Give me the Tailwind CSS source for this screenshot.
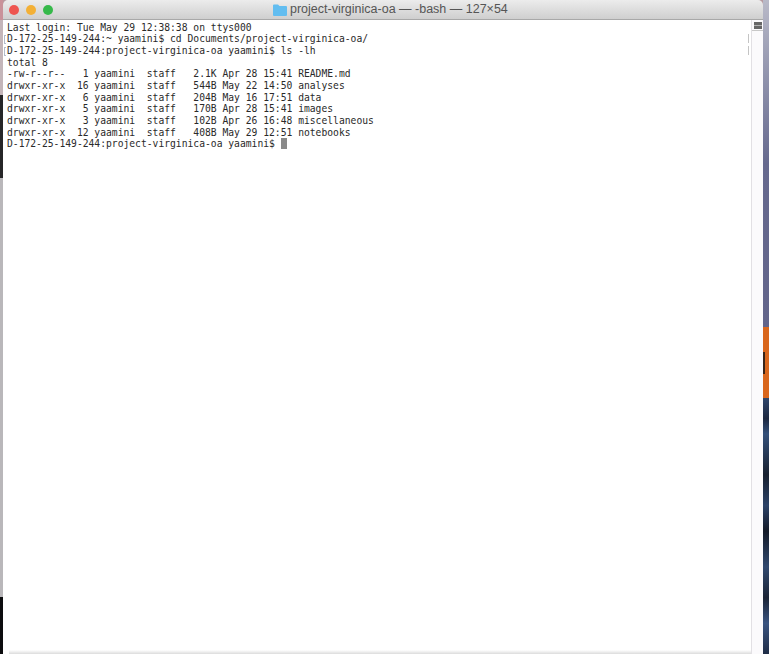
<!DOCTYPE html>
<html lang="en">

<head>
    <meta charset="UTF-8" />
    <title>Terminal</title>
    <script src="https://cdn.jsdelivr.net/npm/@tailwindcss/browser@4"></script>
</head>

<body class="bg-white">
    <div class="w-[769px] h-[654px] overflow-hidden flex">
        <!-- wallpaper, left edge -->
        <div class="w-[3px] h-full flex flex-col shrink-0">
            <div class="h-[20px] bg-[#c9929a]"></div>
            <div class="h-[75px] bg-[#c4b6ba]"></div>
            <div class="h-[83px] bg-[#262628]"></div>
            <div class="h-[419px] bg-[#b9b7ba]"></div>
            <div class="flex-1 bg-[#0c0c0e]"></div>
        </div>

        <!-- terminal window -->
        <div class="w-[760px] h-full shrink-0 flex flex-col">
            <div class="h-[20px] shrink-0 bg-[#b79aa0]">
                <div class="h-[20px] bg-gradient-to-b from-[#ececec] to-[#cfcfcf] border-b border-[#a8a8a8] rounded-t-[5px] flex items-center relative">
                    <div class="absolute left-[6px] top-[5px] flex gap-[7px]">
                        <div class="w-[10px] h-[10px] rounded-full bg-[#ee5550]"></div>
                        <div class="w-[10px] h-[10px] rounded-full bg-[#f3b036]"></div>
                        <div class="w-[10px] h-[10px] rounded-full bg-[#36b94a]"></div>
                    </div>
                    <div class="ml-[270px] flex items-center gap-[3px] font-['Liberation_Sans',sans-serif] text-[12.5px] text-[#555] whitespace-nowrap">
                        <svg width="14" height="12" viewBox="0 0 14 12">
                            <path d="M0 1.5 Q0 .5 1 .5 H5 L6.5 2 H13 Q14 2 14 3 V11 Q14 12 13 12 H1 Q0 12 0 11 Z" fill="#62bdf0" />
                        </svg>
                        <span>project-virginica-oa — -bash — 127×54</span>
                    </div>
                </div>
            </div>

            <div class="flex-1 flex relative">
                <pre class="flex-1 pl-[4px] pt-[1.5px] font-['DejaVu_Sans_Mono',monospace] text-[9.68px] leading-[11.67px] text-[#2a2a2a]">Last login: Tue May 29 12:38:38 on ttys000
D-172-25-149-244:~ yaamini$ cd Documents/project-virginica-oa/
D-172-25-149-244:project-virginica-oa yaamini$ ls -lh
total 8
-rw-r--r--   1 yaamini  staff   2.1K Apr 28 15:41 README.md
drwxr-xr-x  16 yaamini  staff   544B May 22 14:50 analyses
drwxr-xr-x   6 yaamini  staff   204B May 16 17:51 data
drwxr-xr-x   5 yaamini  staff   170B Apr 28 15:41 images
drwxr-xr-x   3 yaamini  staff   102B Apr 26 16:48 miscellaneous
drwxr-xr-x  12 yaamini  staff   408B May 29 12:51 notebooks
D-172-25-149-244:project-virginica-oa yaamini$ <span class="inline-block w-[6px] h-[11px] bg-[#8a8a8a] align-top"></span></pre>

                <!-- prompt marks -->
                <div class="absolute left-[1px] top-[15px] w-[2px] h-[9px] border-l border-y border-[#b4bccb]"></div>
                <div class="absolute left-[1px] top-[27px] w-[2px] h-[9px] border-l border-y border-[#b4bccb]"></div>
                <div class="absolute left-[745px] top-[14px] w-px h-[9px] bg-[#c4c4c4]"></div>
                <div class="absolute left-[745px] top-[26px] w-px h-[9px] bg-[#c4c4c4]"></div>

                <!-- bottom shadow -->
                <div class="absolute left-[6px] right-[12px] bottom-0 h-[4px] bg-gradient-to-b from-white to-[#dcdcdc]"></div>

                <!-- scroll gutter with split-view button -->
                <div class="w-[12px] border-l border-[#e2e0e4] bg-[#fbfafc]">
                    <div class="h-[11px] border-b border-[#c8c8c8] flex items-center justify-center">
                        <div class="w-[8px] h-[7px] bg-[#666] flex items-center">
                            <div class="w-full h-px bg-[#b0b0b0]"></div>
                        </div>
                    </div>
                </div>
            </div>
        </div>

        <!-- wallpaper, right edge -->
        <div class="w-[6px] h-full flex flex-col shrink-0">
            <div class="h-[327px] bg-gradient-to-b from-[#b9bac8] via-[#66698e] to-[#62648a]"></div>
            <div class="h-[71px] bg-[#d9661c] flex items-center">
                <div class="w-[2px] h-[22px] bg-[#3a2418]"></div>
            </div>
            <div class="flex-1 bg-[linear-gradient(to_bottom,#2f466c_0%,#1c2740_8%,#34507a_14%,#18202f_30%,#2c4268_42%,#141a28_52%,#31496f_66%,#1b2436_78%,#3a5480_88%,#1f2c46_100%)]"></div>
        </div>
    </div>
</body>

</html>
